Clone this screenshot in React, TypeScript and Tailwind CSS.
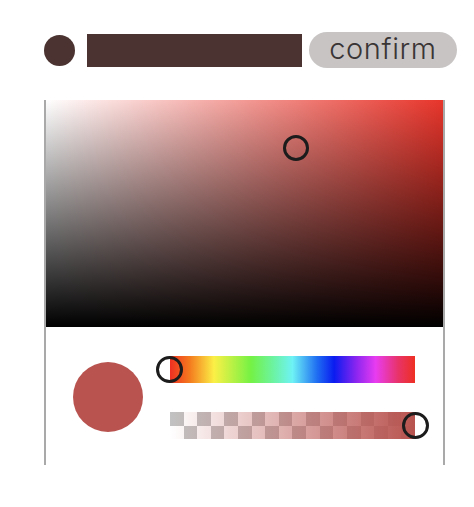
import React, { useState } from 'react';

// Simple colour picker: swatch + value bar + confirm, then the SV square and sliders
const SWATCH = '#4a3330';
const COLS = 18;

const Thumb: React.FC<{ className: string }> = ({ className }) => (
    <div className={`absolute rounded-full border-[3px] border-[#1c1c1c] ${className}`} />
);

const Checker: React.FC = () => (
    <div className="absolute inset-0 flex flex-col">
        {[0, 1].map(row => (
            <div key={row} className="flex flex-1">
                {Array.from({ length: COLS }).map((_, i) => (
                    <div key={i} className={`flex-1 ${(i + row) % 2 === 0 ? 'bg-[#c2c2c2]' : 'bg-white'}`} />
                ))}
            </div>
        ))}
    </div>
);

const App: React.FC = () => {
    const [confirmed, setConfirmed] = useState(false);

    return (
        <div className="w-[474px] h-[507px] bg-white font-['Inter','Liberation_Sans',sans-serif]">
            {/* Top row */}
            <div className="flex items-center pt-[32px] pl-[44px]">
                <div className="w-[31px] h-[31px] rounded-full" style={{ backgroundColor: SWATCH }} />
                <div className="ml-[12px] w-[215px] h-[33px] bg-[#4a3330]" />
                <button
                    onClick={() => setConfirmed(!confirmed)}
                    className="ml-[7px] w-[148px] h-[36px] rounded-full bg-[#c8c4c4] text-[#3a3535] text-[29px] font-light leading-none tracking-[0.6px] flex items-center justify-center pb-[3px]"
                >
                    confirm
                </button>
            </div>

            {/* Picker panel */}
            <div className="mt-[32px] ml-[44px] w-[401px] h-[365px] border-x-2 border-[#a9a9a9] flex flex-col">
                {/* Saturation / value square */}
                <div className="relative h-[227px] bg-[#e8352b]">
                    <div className="absolute inset-0 bg-linear-to-r from-white to-transparent" />
                    <div className="absolute inset-0 bg-linear-to-t from-black to-transparent" />
                    <Thumb className="left-[237px] top-[35px] w-[26px] h-[26px]" />
                </div>

                {/* Preview + sliders */}
                <div className="flex flex-1 pl-[27px] pr-[28px]">
                    <div className="mt-[35px] w-[70px] h-[70px] rounded-full bg-[#b8534f]" />
                    <div className="ml-[27px] flex-1 pt-[29px] flex flex-col gap-[29px]">
                        <div className="relative h-[27px] bg-[linear-gradient(to_right,#ee2f22_0%,#f47a1e_8%,#fbf046_18%,#74f244_33%,#6cf3a0_42%,#6ef2f5_50%,#1f6ef2_60%,#0a1cf0_67%,#8b25f0_76%,#e83cf0_84%,#e8336a_93%,#ee2f22_100%)]">
                            <Thumb className="-left-[14px] top-0 w-[27px] h-[27px]" />
                        </div>
                        <div className="relative h-[27px]">
                            <Checker />
                            <div className="absolute inset-0 bg-linear-to-r from-[#b8534f00] to-[#b8534f]" />
                            <Thumb className="-right-[14px] top-0 w-[27px] h-[27px]" />
                        </div>
                    </div>
                </div>
            </div>
        </div>
    );
};

export default App;
